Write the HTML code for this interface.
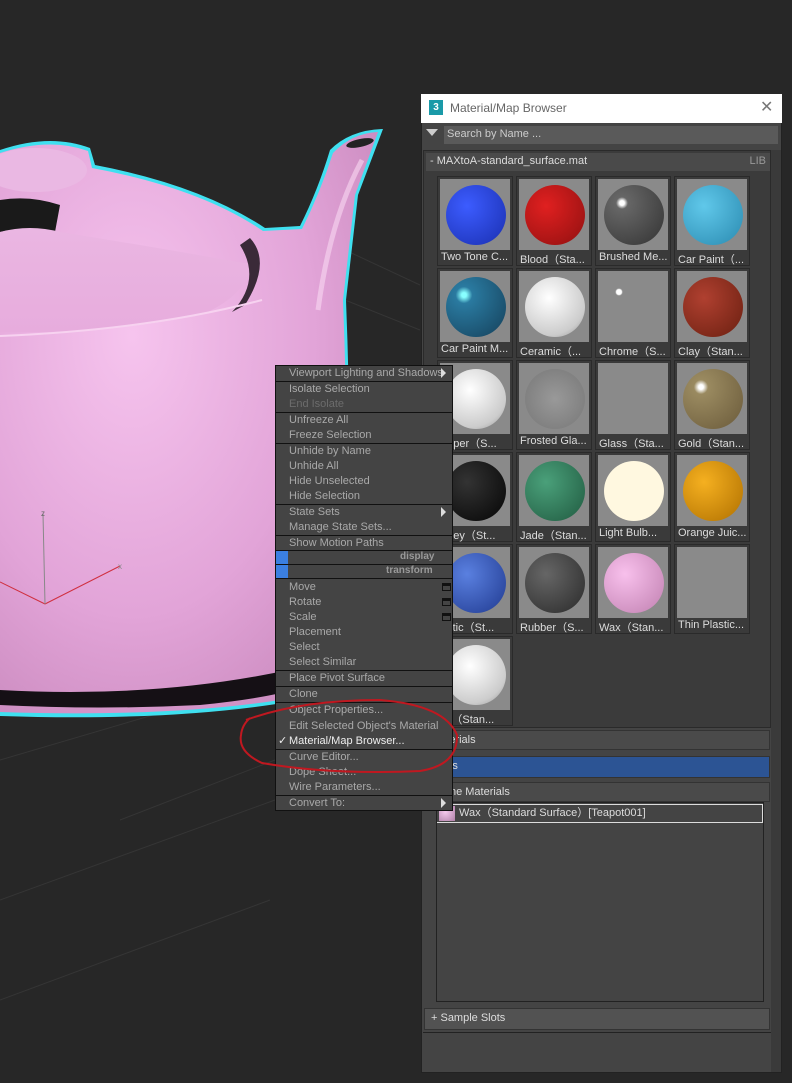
<!DOCTYPE html>
<html><head><meta charset="utf-8"><style>
*{margin:0;padding:0;box-sizing:border-box}
body{width:792px;height:1083px;overflow:hidden;background:#272727;font-family:"Liberation Sans","DejaVu Sans",sans-serif;position:relative}
.a{position:absolute}
.m{position:absolute;left:289px;font-size:11px;color:#a9a9a9;white-space:nowrap;line-height:14px}
.d{color:#6c6c6c}
.sep{position:absolute;left:276px;width:176px;height:1px;background:#111}
.tile{position:absolute;width:76px;height:90px;background:#3a3a3a;border:1px solid #2a2a2a}
.sw{position:absolute;left:2px;top:2px;width:70px;height:71px;background:#8a8a8a;overflow:hidden}
.sp{position:absolute;left:6px;top:6px;width:60px;height:60px;border-radius:50%}
.lb{position:absolute;left:3px;top:74px;font-size:11px;color:#ddd;white-space:nowrap}
.bar{position:absolute;left:424px;width:346px;height:20px;background:#4a4a4a;border:1px solid #333;font-size:11px;color:#ddd;line-height:18px;padding-left:6px}
</style></head><body>
<svg class="a" style="left:0;top:0" width="792" height="1083">
<defs>
<radialGradient id="pb" cx="0.35" cy="0.35" r="0.8"><stop offset="0" stop-color="#f6c4ee"/><stop offset="0.6" stop-color="#e2a4d8"/><stop offset="1" stop-color="#c888bc"/></radialGradient>
<linearGradient id="lid" x1="0" y1="0" x2="0" y2="1"><stop offset="0" stop-color="#eab6e2"/><stop offset="1" stop-color="#e7acdd"/></linearGradient>
</defs>
<g stroke="#353535" stroke-width="1" fill="none">
<path d="M345 250 L420 285 M345 300 L420 330 M0 760 L170 710 M330 710 L420 680 M120 820 L275 760 M0 900 L275 800 M0 1000 L270 900"/>
</g>
<path d="M0 150 Q50 133 90 148 L95 165 Q200 185 265 228 L300 226 Q318 190 330 150 Q350 130 383 129 L358 195 L346 300 Q352 450 348 600 L335 655 Q330 690 300 700 Q180 722 0 716 Z" fill="#3fe0f0"/>
<path d="M0 153 Q50 137 88 151 L92 168 Q200 188 263 231 L302 229 Q320 193 333 153 Q352 133 378 132 L355 195 L343 300 Q349 450 345 600 L332 655 Q327 687 298 697 Q180 718 0 712 Z" fill="url(#pb)"/>
<ellipse cx="35" cy="170" rx="52" ry="22" fill="#eab8e3"/>
<path d="M0 200 Q30 195 60 205 L55 232 Q25 226 0 232Z" fill="#1a1a1a"/>
<path d="M0 232 Q30 224 60 232 Q160 248 255 265 Q240 300 200 315 Q100 335 0 332Z" fill="url(#lid)"/>
<path d="M250 238 Q272 262 245 305 L232 312 Q262 280 240 245Z" fill="#3a2a38"/>
<path d="M0 336 Q150 330 262 300" stroke="#f7d2f0" stroke-width="2" fill="none"/>
<path d="M0 690 Q180 700 330 660 L328 676 Q300 695 200 705 Q100 710 0 705Z" fill="#151015"/>
<ellipse cx="360" cy="143" rx="14" ry="4" fill="#222" transform="rotate(-12 360 143)"/>
<path d="M318 310 Q330 220 362 160" stroke="#f8d8f2" stroke-width="5" fill="none" opacity=".6"/>
<g stroke="#d03040" stroke-width="1" fill="none"><path d="M45 604 L120 566 M45 604 L0 582"/></g>
<path d="M45 604 L43 514" stroke="#888"/>
<text x="41" y="516" font-size="8" fill="#666">z</text><text x="118" y="569" font-size="8" fill="#888">x</text>
</svg>

<!-- panel -->
<div class="a" style="left:421px;top:94px;width:361px;height:979px;background:#444;border:1px solid #222"></div>
<div class="a" style="left:421px;top:94px;width:361px;height:29px;background:#fff"></div>
<div class="a" style="left:429px;top:100px;width:14px;height:15px;background:#1a9aa8;color:#fff;font-size:10px;font-weight:bold;text-align:center;line-height:15px">3</div>
<div class="a" style="left:450px;top:101px;font-size:12px;color:#666">Material/Map Browser</div>
<div class="a" style="left:760px;top:97px;font-size:16px;color:#777">✕</div>
<div class="a" style="left:426px;top:129px;width:0;height:0;border-left:6px solid transparent;border-right:6px solid transparent;border-top:7px solid #ccc"></div>
<div class="a" style="left:444px;top:126px;width:334px;height:18px;background:#5a5a5a;font-size:11px;color:#ccc;padding-left:3px;line-height:17px">Search by Name ...</div>
<div class="a" style="left:423px;top:150px;width:348px;height:578px;background:#3b3b3b;border:1px solid #2a2a2a"></div>
<div class="a" style="left:771px;top:150px;width:10px;height:922px;background:#3a3a3a"></div>
<div class="a" style="left:426px;top:153px;width:344px;height:18px;background:#4a4a4a;font-size:11px;color:#ddd;line-height:17px;padding-left:4px">- MAXtoA-standard_surface.mat<span style="position:absolute;right:4px;color:#999">LIB</span></div>

<div class="tile" style="left:437px;top:176px"><div class="sw"><div class="sp" style="background:radial-gradient(circle at 35% 35%,#3c5cff,#1a2fb0)"></div></div><div class="lb">Two Tone C...</div></div>
<div class="tile" style="left:516px;top:176px"><div class="sw"><div class="sp" style="background:radial-gradient(circle at 35% 35%,#e02020,#901010)"></div></div><div class="lb">Blood（Sta...</div></div>
<div class="tile" style="left:595px;top:176px"><div class="sw"><div class="sp" style="background:radial-gradient(circle at 30% 30%,#fff 4%,#666 10%,#333)"></div></div><div class="lb">Brushed Me...</div></div>
<div class="tile" style="left:674px;top:176px"><div class="sw"><div class="sp" style="background:radial-gradient(circle at 35% 35%,#60c8ea,#2a8ab0)"></div></div><div class="lb">Car Paint（...</div></div>

<div class="tile" style="left:437px;top:268px"><div class="sw"><div class="sp" style="background:radial-gradient(circle at 30% 30%,#8ff 4%,#2a7aa0 14%,#15405a)"></div></div><div class="lb">Car Paint M...</div></div>
<div class="tile" style="left:516px;top:268px"><div class="sw"><div class="sp" style="background:radial-gradient(circle at 40% 35%,#fff,#ccc 70%,#888)"></div></div><div class="lb">Ceramic（...</div></div>
<div class="tile" style="left:595px;top:268px"><div class="sw"><div class="sp" style="background:radial-gradient(circle at 25% 25%,#fff 4%,transparent 6%)"></div></div><div class="lb">Chrome（S...</div></div>
<div class="tile" style="left:674px;top:268px"><div class="sw"><div class="sp" style="background:radial-gradient(circle at 35% 35%,#b04030,#6a1f10)"></div></div><div class="lb">Clay（Stan...</div></div>

<div class="tile" style="left:437px;top:360px"><div class="sw"><div class="sp" style="background:radial-gradient(circle at 40% 35%,#fff,#ccc 70%,#888)"></div></div><div class="lb">opper（S...</div></div>
<div class="tile" style="left:516px;top:360px"><div class="sw"><div class="sp" style="background:radial-gradient(circle,#999,#777)"></div></div><div class="lb">Frosted Gla...</div></div>
<div class="tile" style="left:595px;top:360px"><div class="sw"></div><div class="lb">Glass（Sta...</div></div>
<div class="tile" style="left:674px;top:360px"><div class="sw"><div class="sp" style="background:radial-gradient(circle at 30% 30%,#fff 4%,#9a8a60 12%,#6a5a3a)"></div></div><div class="lb">Gold（Stan...</div></div>

<div class="tile" style="left:437px;top:452px"><div class="sw"><div class="sp" style="background:radial-gradient(circle at 35% 35%,#333,#050505)"></div></div><div class="lb">oney（St...</div></div>
<div class="tile" style="left:516px;top:452px"><div class="sw"><div class="sp" style="background:radial-gradient(circle at 35% 35%,#4aa07a,#205a40)"></div></div><div class="lb">Jade（Stan...</div></div>
<div class="tile" style="left:595px;top:452px"><div class="sw"><div class="sp" style="background:#fff8e0"></div></div><div class="lb">Light Bulb...</div></div>
<div class="tile" style="left:674px;top:452px"><div class="sw"><div class="sp" style="background:radial-gradient(circle at 35% 35%,#f5b020,#b07000)"></div></div><div class="lb">Orange Juic...</div></div>

<div class="tile" style="left:437px;top:544px"><div class="sw"><div class="sp" style="background:radial-gradient(circle at 35% 35%,#5a80e0,#203a90)"></div></div><div class="lb">astic（St...</div></div>
<div class="tile" style="left:516px;top:544px"><div class="sw"><div class="sp" style="background:radial-gradient(circle at 35% 35%,#666,#2a2a2a)"></div></div><div class="lb">Rubber（S...</div></div>
<div class="tile" style="left:595px;top:544px"><div class="sw"><div class="sp" style="background:radial-gradient(circle at 35% 35%,#f8c0ec,#c080b0)"></div></div><div class="lb">Wax（Stan...</div></div>
<div class="tile" style="left:674px;top:544px"><div class="sw"></div><div class="lb">Thin Plastic...</div></div>

<div class="tile" style="left:437px;top:636px"><div class="sw"><div class="sp" style="background:radial-gradient(circle at 40% 35%,#fff,#ccc 70%,#888)"></div></div><div class="lb">ilk（Stan...</div></div>

<div class="bar" style="top:730px">Materials</div>
<div class="bar" style="top:756px;background:#2c5494;height:22px">Maps</div>
<div class="bar" style="top:782px">Scene Materials</div>
<div class="a" style="left:436px;top:802px;width:328px;height:200px;border:1px solid #222;background:#444"></div>
<div class="a" style="left:437px;top:804px;width:326px;height:19px;border:1px solid #ddd;border-left:none;font-size:11px;color:#ddd;line-height:17px;padding-left:22px">Wax（Standard Surface）[Teapot001]</div>
<div class="a" style="left:439px;top:806px;width:16px;height:15px;background:radial-gradient(circle at 40% 40%,#f4c8ec,#b080a8)"></div>
<div class="bar" style="top:1008px;height:22px;background:#525252">+ Sample Slots</div>
<div class="a" style="left:423px;top:1032px;width:348px;height:1px;background:#222"></div>

<!-- menu -->
<div class="a" style="left:275px;top:365px;width:178px;height:446px;background:#444;border:1px solid #111"></div>
<div class="sep" style="top:381px"></div><div class="sep" style="top:412px"></div><div class="sep" style="top:443px"></div><div class="sep" style="top:504px"></div><div class="sep" style="top:535px"></div><div class="sep" style="top:550px"></div><div class="sep" style="top:564px"></div><div class="sep" style="top:578px"></div><div class="sep" style="top:670px"></div><div class="sep" style="top:686px"></div><div class="sep" style="top:702px"></div><div class="sep" style="top:749px"></div><div class="sep" style="top:795px"></div>
<div class="a" style="left:276px;top:551px;width:12px;height:13px;background:#3b7fe0"></div>
<div class="a" style="left:276px;top:565px;width:12px;height:13px;background:#3b7fe0"></div>
<div class="m" style="top:366px">Viewport Lighting and Shadows</div>
<div class="m" style="top:382px">Isolate Selection</div>
<div class="m d" style="top:397px">End Isolate</div>
<div class="m" style="top:413px">Unfreeze All</div>
<div class="m" style="top:428px">Freeze Selection</div>
<div class="m" style="top:444px">Unhide by Name</div>
<div class="m" style="top:459px">Unhide All</div>
<div class="m" style="top:474px">Hide Unselected</div>
<div class="m" style="top:489px">Hide Selection</div>
<div class="m" style="top:505px">State Sets</div>
<div class="m" style="top:520px">Manage State Sets...</div>
<div class="m" style="top:536px">Show Motion Paths</div>
<div class="m" style="top:550px;left:400px;font-weight:bold;font-size:10px;color:#999">display</div>
<div class="m" style="top:564px;left:386px;font-weight:bold;font-size:10px;color:#999">transform</div>
<div class="m" style="top:580px">Move</div>
<div class="m" style="top:595px">Rotate</div>
<div class="m" style="top:610px">Scale</div>
<div class="m" style="top:625px">Placement</div>
<div class="m" style="top:640px">Select</div>
<div class="m" style="top:655px">Select Similar</div>
<div class="m" style="top:671px">Place Pivot Surface</div>
<div class="m" style="top:687px">Clone</div>
<div class="m" style="top:703px">Object Properties...</div>
<div class="m" style="top:719px">Edit Selected Object's Material</div>
<div class="m" style="top:734px;color:#eee">Material/Map Browser...</div>
<div class="a" style="left:278px;top:734px;font-size:11px;color:#eee">✓</div>
<div class="m" style="top:750px">Curve Editor...</div>
<div class="m" style="top:765px">Dope Sheet...</div>
<div class="m" style="top:780px">Wire Parameters...</div>
<div class="m" style="top:796px">Convert To:</div>
<div class="a" style="left:441px;top:368px;border-left:5px solid #ddd;border-top:5px solid transparent;border-bottom:5px solid transparent"></div>
<div class="a" style="left:441px;top:507px;border-left:5px solid #ddd;border-top:5px solid transparent;border-bottom:5px solid transparent"></div>
<div class="a" style="left:441px;top:798px;border-left:5px solid #ddd;border-top:5px solid transparent;border-bottom:5px solid transparent"></div>
<div class="a" style="left:442px;top:583px;width:9px;height:8px;border:1px solid #111;border-top:3px solid #111"></div>
<div class="a" style="left:442px;top:598px;width:9px;height:8px;border:1px solid #111;border-top:3px solid #111"></div>
<div class="a" style="left:442px;top:613px;width:9px;height:8px;border:1px solid #111;border-top:3px solid #111"></div>

<svg class="a" style="left:0;top:0;pointer-events:none" width="792" height="1083">
<path d="M246 720 Q300 700 380 700 Q445 705 457 735 Q458 765 420 771 Q330 775 262 763 Q238 752 241 735 Q242 725 250 718" stroke="#c01820" stroke-width="2" fill="none"/>
</svg>
</body></html>
